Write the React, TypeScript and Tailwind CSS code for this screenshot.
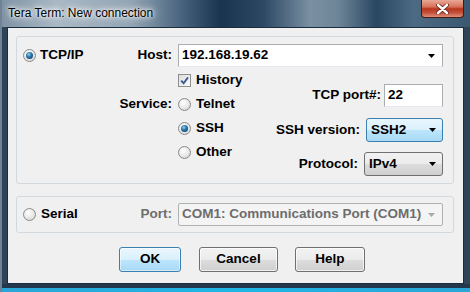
import React from "react";

// Tera Term "New connection" dialog, Vista Aero look

function Radio({ checked }: { checked?: boolean }) {
  return (
    <span className="inline-flex h-[13px] w-[13px] shrink-0 items-center justify-center rounded-full border border-[#8a8a8a] bg-[radial-gradient(circle_at_40%_35%,#ffffff,#e6e6e6_55%,#cdcdcd)]">
      {checked && (
        <span className="h-[7px] w-[7px] rounded-full bg-[radial-gradient(circle_at_40%_35%,#8ed3f2,#236fa3_45%,#0b3356)]" />
      )}
    </span>
  );
}

function Check() {
  return (
    <span className="inline-flex h-[13px] w-[13px] shrink-0 items-center justify-center border border-[#8e8f8f] bg-[linear-gradient(135deg,#dcdcdc,#fbfbfb)]">
      <svg width="9" height="9" viewBox="0 0 9 9">
        <path d="M1.2 4.6 L3.6 7.2 L8 1.4" fill="none" stroke="#3f5a94" strokeWidth="1.9" />
      </svg>
    </span>
  );
}

function Arrow({ color = "#000" }: { color?: string }) {
  return (
    <svg width="7" height="4" viewBox="0 0 7 4" className="shrink-0">
      <path d="M0 0h7L3.5 4z" fill={color} />
    </svg>
  );
}

export default function App() {
  return (
    <div className="h-[292px] w-[470px] overflow-hidden border-l-[2px] border-[#6e8396] bg-[#2f4459] font-['Liberation_Sans',Arial,sans-serif] text-[13.5px] font-bold text-black">
      {/* Title bar */}
      <div className="-ml-[2px] flex h-[27px] items-start justify-between bg-[linear-gradient(90deg,#7d91a3_0%,#a9b8c4_12%,#93a5b5_28%,#3f5b76_40%,#1a344e_47%,#2c4864_56%,#7a90a2_66%,#6d8598_72%,#2a4762_80%,#4d6a83_88%,#3b5871_100%)]">
        <div className="pl-[8px] pt-[6px] text-[12px] font-normal leading-[15px] [text-shadow:0_0_6px_#ffffff,0_0_10px_#ffffff,0_0_3px_#ffffff]">
          Tera Term: New connection
        </div>
        <div className="mr-[6px] flex h-[18px] w-[43px] items-center justify-center rounded-b-[4px] border border-t-0 border-[#4a1a12] bg-[linear-gradient(180deg,#e8a898_0%,#d8725b_40%,#b8341c_52%,#c4513a_75%,#df8f7a_100%)]">
          <svg width="13" height="10" viewBox="0 0 13 10">
            <path d="M2 1 L11 9 M11 1 L2 9" stroke="#5a1e14" strokeWidth="4" strokeLinecap="round" />
            <path d="M2 1 L11 9 M11 1 L2 9" stroke="#ffffff" strokeWidth="2.4" strokeLinecap="round" />
          </svg>
        </div>
      </div>

      {/* Client area */}
      <div className="ml-[5px] h-[257px] w-[457px] border border-[#1b2c3d] bg-[#f0f0f0] pl-[8px] pt-[8px]">
        {/* TCP/IP group */}
        <div className="w-[438px] rounded-[3px] border border-[#d2d9de] pb-[7px] pl-[6px] pr-[10px] pt-[7px]">
          <div className="flex h-[23px] items-center">
            <div className="flex w-[155px] items-center justify-between pr-[6px]">
              <div className="flex items-center gap-[4px]">
                <Radio checked />
                <span>TCP/IP</span>
              </div>
              <span>Host:</span>
            </div>
            <div className="flex h-[23px] w-[265px] items-center justify-between border border-[#abadb3] border-b-[#e3e9ef] bg-white pl-[3px] pr-[7px]">
              <span>192.168.19.62</span>
              <Arrow />
            </div>
          </div>

          <div className="flex">
            <div className="w-[230px] pt-[1px]">
              <div className="flex h-[24px] items-center">
                <div className="w-[155px]" />
                <Check />
                <span className="ml-[5px]">History</span>
              </div>
              <div className="flex h-[24px] items-center">
                <div className="w-[155px] pr-[6px] text-right">Service:</div>
                <Radio />
                <span className="ml-[5px]">Telnet</span>
              </div>
              <div className="flex h-[24px] items-center">
                <div className="w-[155px]" />
                <Radio checked />
                <span className="ml-[5px]">SSH</span>
              </div>
              <div className="flex h-[24px] items-center">
                <div className="w-[155px]" />
                <Radio />
                <span className="ml-[5px]">Other</span>
              </div>
            </div>

            <div className="flex flex-1 flex-col items-end pt-[17px]">
              <div className="flex h-[23px] items-center gap-[3px]">
                <span>TCP port#:</span>
                <div className="flex h-[23px] w-[59px] items-center border border-[#abadb3] border-b-[#e3e9ef] bg-white pl-[3px]">
                  22
                </div>
              </div>
              <div className="mt-[11px] flex h-[24px] items-center gap-[6px]">
                <span>SSH version:</span>
                <div className="flex h-[24px] w-[77px] items-center justify-between rounded-[3px] border border-[#3c7fb1] bg-[linear-gradient(180deg,#eaf6fd_0%,#d9f0fc_50%,#bee6fd_50%,#a7d9f5_100%)] pl-[4px] pr-[6px]">
                  <span>SSH2</span>
                  <Arrow />
                </div>
              </div>
              <div className="mt-[10px] flex h-[24px] items-center gap-[6px]">
                <span>Protocol:</span>
                <div className="flex h-[24px] w-[79px] items-center justify-between rounded-[3px] border border-[#707070] bg-[linear-gradient(180deg,#f2f2f2_0%,#ebebeb_50%,#dddddd_50%,#cfcfcf_100%)] pl-[4px] pr-[6px]">
                  <span>IPv4</span>
                  <Arrow />
                </div>
              </div>
            </div>
          </div>
        </div>

        {/* Serial group */}
        <div className="mt-[12px] w-[438px] rounded-[3px] border border-[#d2d9de] pb-[6px] pl-[6px] pr-[10px] pt-[6px]">
          <div className="flex h-[23px] items-center">
            <div className="flex w-[155px] items-center justify-between pr-[6px]">
              <div className="flex items-center gap-[5px]">
                <Radio />
                <span>Serial</span>
              </div>
              <span className="text-[#6d6d6d]">Port:</span>
            </div>
            <div className="flex h-[23px] w-[265px] items-center justify-between rounded-[2px] border border-[#adb2b5] bg-[#f4f4f4] pl-[3px] pr-[7px] text-[#6d6d6d]">
              <span>COM1: Communications Port (COM1)</span>
              <Arrow color="#a8a8a8" />
            </div>
          </div>
        </div>

        {/* Buttons */}
        <div className="mt-[14px] flex pl-[103px]">
          <button className="h-[25px] w-[62px] rounded-[3px] border border-[#3c7fb1] bg-[linear-gradient(180deg,#eaf6fd_0%,#d9f0fc_50%,#bee6fd_50%,#a7d9f5_100%)] shadow-[inset_0_0_0_1px_#ffffff80]">
            OK
          </button>
          <button className="ml-[18px] h-[25px] w-[79px] rounded-[3px] border border-[#707070] bg-[linear-gradient(180deg,#f2f2f2_0%,#ebebeb_50%,#dddddd_50%,#cfcfcf_100%)] shadow-[inset_0_0_0_1px_#ffffffb0]">
            Cancel
          </button>
          <button className="ml-[17px] h-[25px] w-[70px] rounded-[3px] border border-[#707070] bg-[linear-gradient(180deg,#f2f2f2_0%,#ebebeb_50%,#dddddd_50%,#cfcfcf_100%)] shadow-[inset_0_0_0_1px_#ffffffb0]">
            Help
          </button>
        </div>
      </div>

      {/* Bottom frame */}
      <div className="-ml-[2px] h-[4px] bg-[#22374c]" />
      <div className="-ml-[2px] h-[4px] bg-[linear-gradient(90deg,#2aa6d6,#1fb6e6_50%,#2aa6d6)]" />
    </div>
  );
}
